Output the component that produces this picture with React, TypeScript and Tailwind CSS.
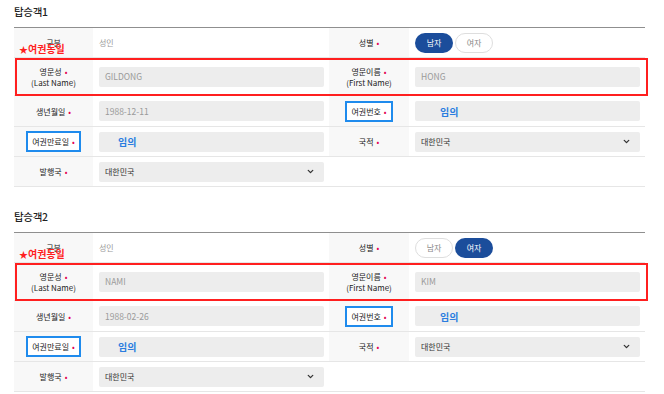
import React from "react";
import { ChevronDown } from "lucide-react";

type Passenger = {
  title: string;
  gender: "m" | "f";
  lastName: string;
  firstName: string;
  birth: string;
};

const passengers: Passenger[] = [
  { title: "탑승객1", gender: "m", lastName: "GILDONG", firstName: "HONG", birth: "1988-12-11" },
  { title: "탑승객2", gender: "f", lastName: "NAMI", firstName: "KIM", birth: "1988-02-26" },
];

const Dot = () => <span className="ml-[3px] text-[#e4004f]">•</span>;

const Label = ({ children, boxed = false }: { children: React.ReactNode; boxed?: boolean }) => (
  <div className="flex items-center justify-center bg-[#f8f8f8] text-center text-[8px] leading-[11px] text-[#222]">
    {boxed ? (
      <span className="border-2 border-[#1f8bed] bg-white px-[4px] py-[3px]">{children}</span>
    ) : (
      <span>{children}</span>
    )}
  </div>
);

const Cell = ({ children }: { children?: React.ReactNode }) => (
  <div className="flex items-center pl-[6px] pr-[5px]">{children}</div>
);

const Input = ({ value }: { value: string }) => (
  <div className="flex h-[20px] w-full items-center rounded-[2px] bg-[#ededed] px-[6px] text-[8.5px] text-[#9a9a9a]">
    {value}
  </div>
);

const Any = ({ indent }: { indent: string }) => (
  <div className={`flex h-[20px] w-full items-center rounded-[2px] bg-[#ededed] ${indent} text-[10px] font-bold text-[#2a7de0]`}>
    임의
  </div>
);

const Select = () => (
  <div className="flex h-[20px] w-full items-center justify-between rounded-[2px] bg-[#ededed] pl-[6px] pr-[9px] text-[8px] text-[#333]">
    <span>대한민국</span>
    <ChevronDown size={9} strokeWidth={3.5} className="text-[#333]" />
  </div>
);

const Pill = ({ on, children }: { on: boolean; children: React.ReactNode }) => (
  <div
    className={
      on
        ? "flex h-[20px] w-[38px] items-center justify-center rounded-full bg-[#1b4d9b] text-[8px] text-white"
        : "flex h-[20px] w-[38px] items-center justify-center rounded-full border border-[#dedede] bg-white text-[8px] text-[#888]"
    }
  >
    {children}
  </div>
);

const row = "relative grid grid-cols-[79px_236px_80px_236px] border-b border-[#e6e6e6]";

const PassengerTable = ({ p }: { p: Passenger }) => (
  <section>
    <h2 className="mb-[8px] h-[14px] text-[10.5px] font-medium leading-[14px] tracking-[-0.3px] text-[#222]">{p.title}</h2>
    <div className="w-[631px] border-t border-[#8f8f8f]">
      {/* 구분 / 성별 */}
      <div className={`${row} h-[30px]`}>
        <Label>구분</Label>
        <Cell>
          <span className="text-[8px] text-[#999]">성인</span>
        </Cell>
        <Label>
          성별
          <Dot />
        </Label>
        <Cell>
          <div className="flex gap-[2px]">
            <Pill on={p.gender === "m"}>남자</Pill>
            <Pill on={p.gender === "f"}>여자</Pill>
          </div>
        </Cell>
      </div>

      {/* 영문 이름 */}
      <div className={`${row} h-[38px]`}>
        <Label>
          영문성
          <Dot />
          <br />
          (Last Name)
        </Label>
        <Cell>
          <Input value={p.lastName} />
        </Cell>
        <Label>
          영문이름
          <Dot />
          <br />
          (First Name)
        </Label>
        <Cell>
          <Input value={p.firstName} />
        </Cell>
        <div className="pointer-events-none absolute top-[0px] left-[1px] h-[38px] w-[633px] border-2 border-[#ff1f1f]" />
        <div className="absolute top-[-14px] left-[5px] text-[10px] font-bold leading-none text-[#ff1f1f]">
          <span className="text-[9px]">★</span>여권동일
        </div>
      </div>

      {/* 생년월일 / 여권번호 */}
      <div className={`${row} h-[31px]`}>
        <Label>
          생년월일
          <Dot />
        </Label>
        <Cell>
          <Input value={p.birth} />
        </Cell>
        <Label boxed>
          여권번호
          <Dot />
        </Label>
        <Cell>
          <Any indent="pl-[25px]" />
        </Cell>
      </div>

      {/* 여권만료일 / 국적 */}
      <div className={`${row} h-[30px]`}>
        <Label boxed>
          여권만료일
          <Dot />
        </Label>
        <Cell>
          <Any indent="pl-[19px]" />
        </Cell>
        <Label>
          국적
          <Dot />
        </Label>
        <Cell>
          <Select />
        </Cell>
      </div>

      {/* 발행국 */}
      <div className={`${row} h-[30px]`}>
        <Label>
          발행국
          <Dot />
        </Label>
        <Cell>
          <Select />
        </Cell>
        <div />
        <div />
      </div>
    </div>
  </section>
);

export default function App() {
  return (
    <div
      className="min-h-[394px] w-[664px] bg-white pt-[5px] pl-[14px]"
      style={{ fontFamily: '"Noto Sans CJK KR", "Noto Sans", sans-serif' }}
    >
      <div className="flex flex-col gap-[23px]">
        {passengers.map((p) => (
          <PassengerTable key={p.title} p={p} />
        ))}
      </div>
    </div>
  );
}
